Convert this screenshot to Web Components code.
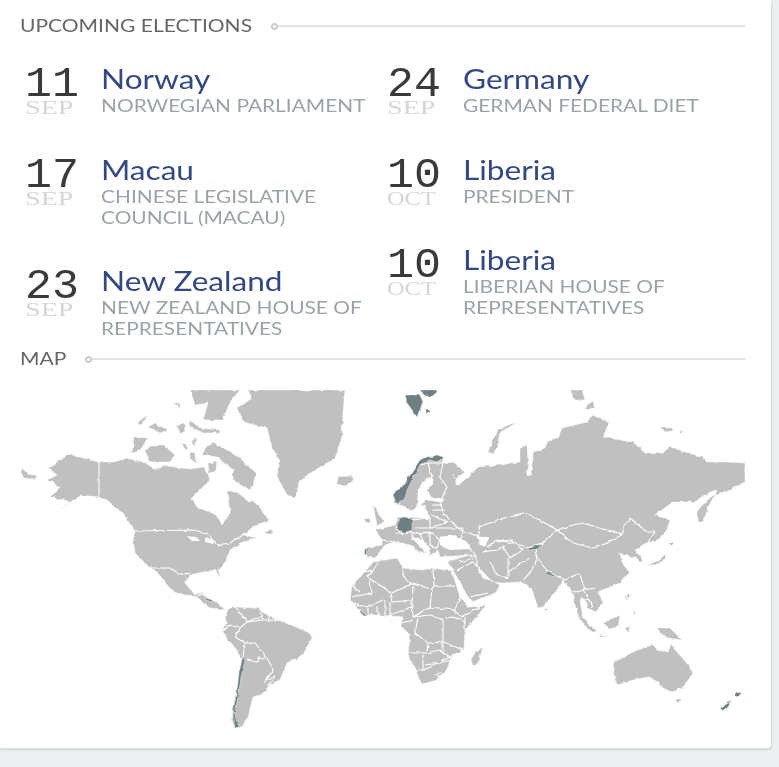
<!DOCTYPE html>
<html lang="en"><head><meta charset="utf-8"><title>Upcoming elections</title>
<style>
html,body{margin:0;padding:0;background:#ecf0f1}
body{font-family:Lato,"Liberation Sans",sans-serif;width:779px;height:767px;overflow:hidden}
</style></head><body>
<election-panel>
  <section-heading style="--w:232px">UPCOMING ELECTIONS</section-heading>
  <div slot="left">
    <election-item day="11" month="SEP" place="Norway" body="NORWEGIAN PARLIAMENT"></election-item>
    <election-item day="17" month="SEP" place="Macau" body="CHINESE LEGISLATIVE COUNCIL (MACAU)"></election-item>
    <election-item day="23" month="SEP" place="New Zealand" body="NEW ZEALAND HOUSE OF REPRESENTATIVES"></election-item>
  </div>
  <div slot="right">
    <election-item day="24" month="SEP" place="Germany" body="GERMAN FEDERAL DIET"></election-item>
    <election-item day="10" month="OCT" place="Liberia" body="PRESIDENT"></election-item>
    <election-item day="10" month="OCT" place="Liberia" body="LIBERIAN HOUSE OF REPRESENTATIVES"></election-item>
  </div>
  <section-heading slot="map-title" style="--w:46px">MAP</section-heading>
  <world-map slot="map"></world-map>
</election-panel>
<script>
class ElectionPanel extends HTMLElement{
  constructor(){super();this.attachShadow({mode:'open'}).innerHTML=`<style>
  :host{display:block;box-sizing:border-box;width:771px;height:749px;background:#fff;border-bottom:1px solid #d9dddd;border-radius:0 0 4px 0;box-shadow:1px 1px 2px rgba(0,0,0,.12);padding:14px 26px 0 20px;color:#666}
  .cols{display:flex;margin-top:24px;height:287px}
  ::slotted([slot=left]){width:362px;flex:none}
  ::slotted([slot=right]){flex:1}
  </style><slot></slot><div class="cols"><slot name="left"></slot><slot name="right"></slot></div><slot name="map-title"></slot><slot name="map"></slot>`}
}
class SectionHeading extends HTMLElement{
  constructor(){super();this.attachShadow({mode:'open'}).innerHTML=`<style>
  :host{display:flex;align-items:center;height:22px;font:400 18px/22px Lato,sans-serif;color:#666;filter:blur(.35px)}
  .txt{flex:none;width:var(--w);white-space:nowrap}
  .in{display:inline-block;transform:scaleX(1.167);transform-origin:0 50%}
  .dot{flex:none;box-sizing:border-box;width:7px;height:7px;border-radius:50%;border:2px solid #ccc;margin:3px 0 0 19px}
  .line{flex:1;height:2px;background:#e2e2e2;margin-top:2px}
  </style><span class="txt"><span class="in"><slot></slot></span></span><span class="dot"></span><span class="line"></span>`}
}
class ElectionItem extends HTMLElement{
  constructor(){super();const r=this.attachShadow({mode:'open'});
  r.innerHTML=`<style>
  :host{display:flex;align-items:flex-start;filter:blur(.35px)}
  .date{flex:none;width:81px;padding-left:5px;box-sizing:border-box;display:flex;flex-direction:column}
  .d{font:400 42px/34px "Liberation Mono",monospace;color:#3a3a3a;height:34px;margin-top:8px;transform:scaleX(1.07);transform-origin:0 50%}
  .m{font:400 19px/14px "Liberation Serif",serif;color:#d6d6d6;transform-origin:0 50%;height:14px;white-space:nowrap;margin-top:-1px}
  .t{flex:1;min-width:0;padding-top:3px}
  .p{font:400 26px/32px Lato,sans-serif;color:#34497f;transform:scaleX(1.215);transform-origin:0 50%;white-space:nowrap}
  .b{font:400 18px/21px Lato,sans-serif;color:#9aa3a8;width:240px;transform:scaleX(1.16);transform-origin:0 50%}
  </style><div class="date"><div class="d"></div><div class="m"></div></div><div class="t"><div class="p"></div><div class="b"></div></div>`;}
  connectedCallback(){const r=this.shadowRoot;
    r.querySelector('.d').textContent=this.getAttribute('day');
    const m=r.querySelector('.m');m.textContent=this.getAttribute('month');
    m.style.transform=this.getAttribute('month')==='SEP'?'scaleX(1.48)':'scaleX(1.28)';
    r.querySelector('.p').textContent=this.getAttribute('place');
    const b=this.getAttribute('body');r.querySelector('.b').textContent=b;
    this.style.height=(b.length>22?111:90.5)+'px';
  }
}
const land=[
"50,467 68,454 98,462 113,462 125,459 147,463 153,469 167,466 190,469 203,467 208,473 210,480 192,498 197,507 217,515 222,525 230,513 227,492 237,492 250,503 253,500 269,520 253,527 243,535 257,538 240,543 230,550 227,560 218,570 222,580 220,577 215,570 203,572 190,575 185,583 195,595 205,590 202,595 208,598 218,603 227,610 222,609 210,608 197,597 173,592 158,573 150,568 135,553 133,537 135,532 122,513 107,500 98,497 80,495 68,505 53,513 72,502 50,497 60,487 47,480 57,475 48,467",
"21,467 28,474 38,476 33,480 25,478 21,473",
"203,450 213,442 227,450 240,458 257,475 250,490 233,480 233,470 217,457 203,455",
"145,452 150,446 165,446 175,455 170,462 150,462",
"132,452 134,437 148,438 140,450",
"190,390 240,390 230,402 223,420 203,420 208,403 195,405",
"190,420 200,428 220,430 220,433 203,433 190,426",
"137,423 147,415 146,420 140,425","148,427 155,423 168,430 160,433","177,425 184,423 185,432 180,433",
"173,402 180,405 180,410","190,441 197,438 195,447","180,443 188,445 187,451","190,452 195,453 197,463 190,460","208,463 217,462 215,473 209,473",
"265,532 270,530 275,534 268,534",
"248,390 345,390 343,413 342,437 335,458 320,467 300,480 295,497 287,495 277,477 280,460 273,452 267,428 243,422 238,408 252,398",
"337,477 352,475 354,481 345,486 338,484",
"373,505 378,512 385,523 377,525 375,515","365,519 370,518 369,523 365,522",
"393,495 405,483 420,462 440,455 443,463 453,462 465,472 455,480 452,473 458,485 473,473 477,467 500,465 517,462 520,462 520,448 527,445 528,462 527,475 532,475 533,452 545,448 548,440 558,438 562,428 587,422 593,415 610,422 603,437 633,442 645,453 663,452 670,447 702,457 707,462 727,462 745,463 745,482 717,495 715,490 702,497 693,502 673,502 655,515 670,520 667,530 655,542 648,542 635,550 640,555 643,562 639,562 635,557 630,557 620,553 622,562 630,572 620,583 603,590 598,592 603,602 596,612 588,608 584,598 580,600 582,612 586,624 579,618 575,605 572,592 563,580 557,590 543,607 538,608 532,590 525,583 520,582 502,583 493,582 478,568 483,578 490,580 500,585 495,593 472,602 468,597 455,574 452,566 447,562 470,555 440,557 438,550 433,553 428,557 430,548 420,538 412,538 422,548 425,553 420,553 412,546 402,543 395,542 385,545 375,558 367,557 367,547 382,545 382,540 375,530 395,525 398,517 415,517 430,518 425,505 417,508 410,511 405,507 395,503",
"488,452 497,430 520,420 500,433 495,455","660,427 670,427 673,431 665,432","680,430 685,432 681,433","570,390 582,390 585,400 575,400","587,405 593,401 595,408 585,410",
"698,522 698,510 715,492 710,505 702,522",
"647,565 660,560 668,552 665,560 655,565","668,543 674,542 672,546",
"365,572 373,562 397,558 403,568 422,570 433,568 452,571 460,597 468,607 485,606 478,615 465,630 464,650 450,658 448,668 437,680 422,684 408,655 410,635 402,627 403,617 380,615 365,615 350,600 352,585",
"483,647 478,663 473,667 471,660 475,652",
"228,610 235,607 258,608 263,613 278,620 310,633 312,638 303,655 287,663 280,680 268,685 267,692 253,697 248,717 242,727 235,727 232,720 233,707 237,690 239,673 242,660 237,650 222,632 227,623 225,618",
"577,615 585,620 597,632 592,632 582,623","598,635 610,637 600,637","603,623 620,615 618,627 610,629","625,628 630,626 628,633","657,628 670,628 682,640 668,638 660,633",
"627,593 630,595 628,598","633,610 636,612 634,614","544,610 546,608 548,612","626,595 628,597 626,600",
"613,663 637,650 652,645 657,650 668,652 671,645 690,667 692,675 682,688 672,692 663,688 658,682 648,677 633,680 618,685 615,675",
"675,699 682,699 678,703"
];
const seas=[
"440,537 455,535 470,545 470,549 450,550 440,546","478,537 488,537 486,547 480,545",
"430,477 434,480 427,490 433,498 445,499 440,502 425,500 418,510 412,514 417,505 418,490 425,480",
"412,514 420,507 425,505 427,513 415,516",
"187,536 196,537 200,541 192,541","205,538 215,541 213,544 205,542","412,538 418,538 428,548 426,552"
];
const borders=[
"99,462 99,497 122,513 135,532","135,531 192,530 207,533 217,545 230,543 245,533 253,532","150,568 170,568 183,575 190,573","153,573 160,583","198,596 205,590",
"222,632 230,625 240,628","240,628 235,637 245,643","235,607 247,622 260,617","260,612 263,620","270,615 268,620","276,617 275,622","240,628 247,622 263,620 278,620","245,643 255,643 265,655","265,655 272,667 273,672","247,660 257,662 258,657 265,658","265,680 275,677 268,685","273,672 267,677 265,683","245,643 243,657",
"367,577 379,563","370,580 372,593 352,597","367,577 392,593 412,584","402,560 403,568 403,577 412,584","433,568 434,586","412,584 432,589 434,586","434,586 455,586","413,586 412,603 413,617","432,589 430,607","430,607 455,610 460,597","413,617 430,607","390,593 392,602 412,600","390,602 390,615 412,607","368,608 368,615","378,607 378,615","385,600 385,615","353,603 367,607 383,600","453,610 462,617 480,607","445,618 453,617 465,622","465,617 465,630","418,618 415,633 428,643 443,642 443,620 430,615","413,617 430,615","402,623 413,620","428,643 427,653 408,653","423,655 423,670 413,672","425,665 440,663","427,653 440,650 450,657","443,642 463,650 450,657 443,660 440,663","423,670 440,663 450,660","443,642 443,650","360,592 352,585","365,572 373,570 367,577",
"443,463 440,477 447,487 440,502 443,513 460,530 480,537","428,463 432,477 427,490","420,465 428,463 443,463","478,527 507,517 523,513 540,520 557,530","478,527 480,537","557,530 543,543 527,547 513,543 497,540 488,547","557,530 573,525 583,523 607,530 623,534 603,545 593,548 573,543 557,530","623,527 630,518 647,532 655,532 648,543","623,534 623,527",
"470,548 477,557 477,566","508,558 508,578","508,572 523,562 530,558","523,580 533,570 537,558","537,558 548,572 565,580 575,575 580,575 585,590","497,542 510,540 523,550 510,558 503,547","543,543 535,550 537,558","457,570 473,562 487,577","470,597 488,593","460,562 473,558","490,562 497,575 508,578","470,555 477,557","482,552 497,550 503,547",
"395,525 398,530 403,535","403,533 430,532 440,540","412,520 430,518","413,518 430,517 430,528 415,528","430,528 463,528 462,538 440,537","432,515 447,522 430,528","432,505 442,505","432,510 445,510","395,533 430,533 430,545 437,548","412,533 412,540","420,533 425,545","440,540 437,548 430,545","382,540 395,542",
"574,592 583,590 590,600","583,590 595,588","580,598 590,600 593,608","637,550 648,545"
];
const dark=[
"405,395 420,395 423,402 417,417 412,410 407,403","420,390 437,390 433,396 425,396","426,408 431,412 426,413",
"393,495 395,492 405,483 412,472 420,460 437,455 443,457 438,462 430,460 420,465 412,480 407,490 405,498 397,504",
"397,525 400,518 408,517 412,520 412,530 403,533 398,530",
"528,548 535,545 542,545 537,549 530,550","545,572 550,573 558,577 552,576 546,574",
"366,548 368,549 367,555 365,555",
"243,657 245,660 241,677 238,697 236,707 235,720 240,728 235,727 233,720 234,707 237,690 239,673 242,660",
"205,598 212,600 212,602 206,600","360,610 366,615 364,615 360,612",
"735,692 742,693 737,697 735,695","720,708 730,702 733,699 728,707 723,711"
];
const pg=(a,c)=>a.map(p=>`<polygon points="${p}" class="${c}"/>`).join('');
class WorldMap extends HTMLElement{
  constructor(){super();this.attachShadow({mode:'open'}).innerHTML=`<style>
  :host{display:block;margin-top:21px;height:340px}
  svg{display:block}
  .l{fill:#c0c0c0;stroke:#fff;stroke-width:.5;stroke-linejoin:round}
  .s{fill:#fff}
  .d{fill:#6e8083;stroke:#fff;stroke-width:.4;stroke-linejoin:round}
  .b{fill:none;stroke:#fff;stroke-width:1.1;stroke-linejoin:round}
  </style><svg width="725" height="340" viewBox="20 390 725 340" role="img" aria-label="World map">
  <defs><filter id="rough" x="20" y="390" width="725" height="340" filterUnits="userSpaceOnUse" color-interpolation-filters="sRGB">
  <feTurbulence type="fractalNoise" baseFrequency=".16" numOctaves="2" seed="4" result="n"/>
  <feDisplacementMap in="SourceGraphic" in2="n" scale="3.5" xChannelSelector="R" yChannelSelector="G"/>
  <feGaussianBlur stdDeviation=".5"/></filter></defs>
  <g filter="url(#rough)">
  <rect x="20" y="390" width="725" height="340" fill="#fff"/>
  ${pg(land,'l')}${pg(seas,'s')}${borders.map(p=>`<polyline points="${p}" class="b"/>`).join('')}${pg(dark,'d')}
  <ellipse cx="439" cy="675" rx="3" ry="2" fill="none" stroke="#fff"/>
  </g></svg>`}
}
customElements.define('election-panel',ElectionPanel);
customElements.define('section-heading',SectionHeading);
customElements.define('election-item',ElectionItem);
customElements.define('world-map',WorldMap);
</script>
</body></html>
